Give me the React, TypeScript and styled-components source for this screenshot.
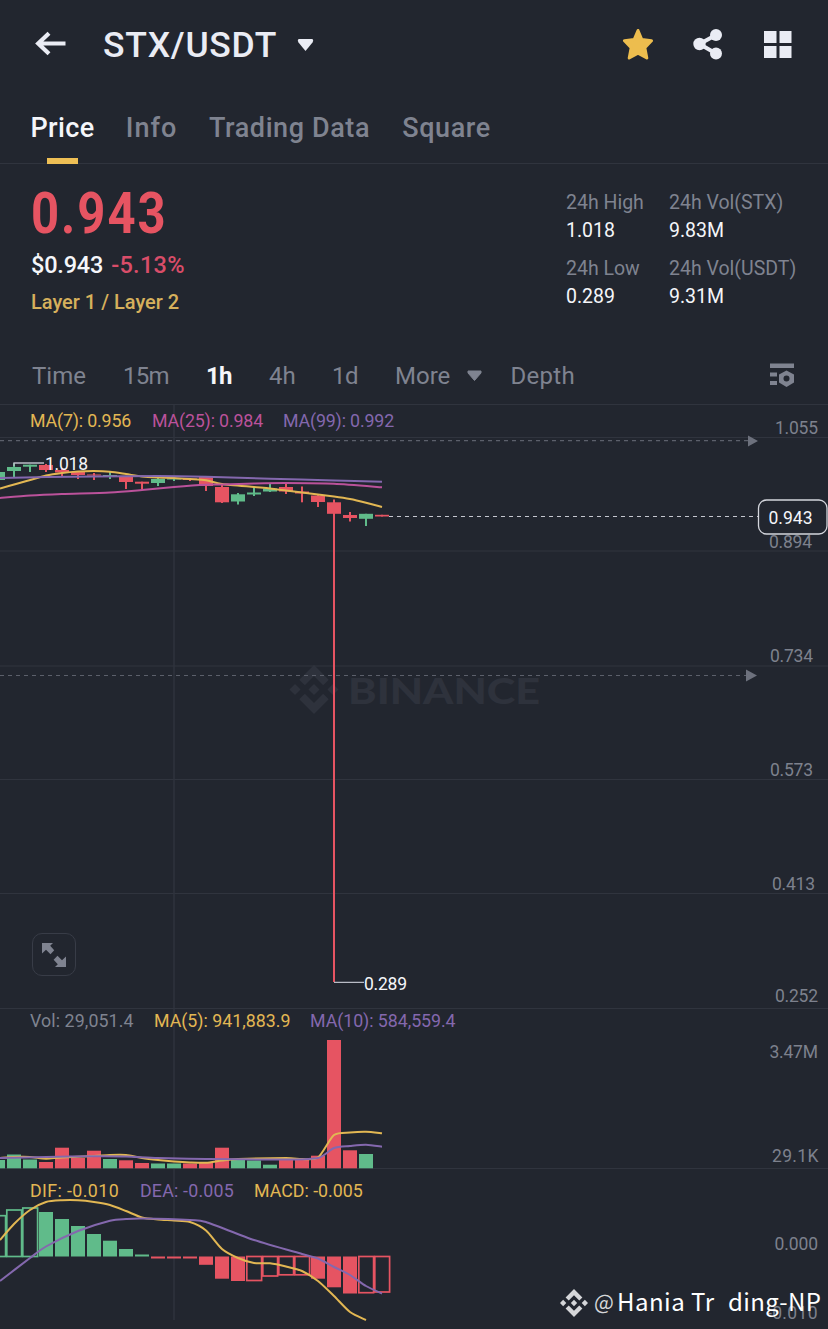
import React from 'react';
import styled, { createGlobalStyle } from 'styled-components';

const color = {
  bg: '#22262f',
  line: '#30343e',
  text: '#eaecf4',
  white: '#f5f6fa',
  muted: '#7f8390',
  axis: '#7d818d',
  red: '#e65462',
  green: '#60bb8a',
  yellow: '#e2b753',
  pink: '#bb529b',
  purple: '#8468ae',
};

const GlobalStyle = createGlobalStyle`
  * { box-sizing: border-box; }
  body {
    margin: 0;
    background: ${color.bg};
    font-family: Roboto, "Liberation Sans", sans-serif;
    -webkit-font-smoothing: antialiased;
  }
`;

const Screen = styled.main`
  position: relative;
  display: flex;
  flex-direction: column;
  width: 828px;
  height: 1329px;
  overflow: hidden;
  background: ${color.bg};
  color: ${color.text};
  white-space: nowrap;
`;

/* Header */

const Header = styled.header`
  display: flex;
  align-items: center;
  height: 91px;
  padding: 0 36px 0 34px;
`;

const BackIcon = styled.svg`
  margin-top: -3px;
`;

const Title = styled.h1`
  flex: 1;
  display: flex;
  align-items: center;
  gap: 20px;
  margin: -1px 0 0 36px;
  font-size: 35.5px;
  font-weight: 500;
  line-height: 44px;
  letter-spacing: 0.75px;
`;

const Actions = styled.div`
  display: flex;
  align-items: center;
  gap: 39px;
  margin-top: -3px;
`;

const Tabs = styled.nav`
  display: flex;
  gap: 31px;
  height: 73px;
  padding: 21px 31px 0 30.500px;
  border-bottom: 1px solid ${color.line};
`;

const Tab = styled.span<{ $width: number; $spacing: number; $active?: boolean }>`
  display: flex;
  flex-direction: column;
  align-items: center;
  justify-content: space-between;
  width: ${p => p.$width}px;
  height: 52px;
  font-size: 27px;
  font-weight: 500;
  line-height: 32px;
  letter-spacing: ${p => p.$spacing}px;
  color: ${p => (p.$active ? color.white : color.muted)};
`;

const TabMark = styled.i`
  width: 31px;
  height: 6px;
  background: #eebf55;
`;

/* Price summary */

const Summary = styled.section`
  display: flex;
  justify-content: space-between;
  height: 182px;
  padding: 22px 30px 0 31px;
`;

const Quote = styled.div`
  display: flex;
  flex-direction: column;
`;

const LastPrice = styled.strong`
  font-size: 57px;
  font-weight: 700;
  line-height: 56px;
  letter-spacing: 2.3px;
  color: ${color.red};
  transform: scaleX(0.86);
  transform-origin: left;
`;

const PriceRow = styled.div`
  display: flex;
  gap: 8px;
  margin-top: 8px;
  font-size: 23.5px;
  font-weight: 500;
  line-height: 30px;
  letter-spacing: -0.2px;
  color: ${color.white};
`;

const Change = styled.span`
  letter-spacing: 0.3px;
  color: #d94d69;
`;

const Tag = styled.span`
  margin-top: 9px;
  font-size: 20px;
  font-weight: 500;
  line-height: 26px;
  color: #d6b05c;
`;

const Stats = styled.dl`
  display: grid;
  grid-template-columns: 103px 129px;
  grid-auto-rows: 66px;
  margin: 3px 0 0;
`;

const Stat = styled.div`
  font-size: 19.5px;
  line-height: 28px;
`;

const StatLabel = styled.dt`
  color: ${color.muted};
`;

const StatValue = styled.dd`
  margin: 0;
  color: ${color.white};
`;

/* Interval bar */

const Intervals = styled.nav`
  display: flex;
  align-items: center;
  height: 59px;
  padding: 1px 33px 0 32px;
  border-bottom: 1px solid ${color.line};
`;

const Interval = styled.span<{ $width: number; $active?: boolean; $spacing?: number; $offset?: number }>`
  display: flex;
  align-items: center;
  justify-content: space-between;
  width: ${p => p.$width}px;
  margin-left: ${p => p.$offset ?? 0}px;
  font-size: 24px;
  font-weight: ${p => (p.$active ? 700 : 400)};
  letter-spacing: ${p => p.$spacing ?? 0}px;
  color: ${p => (p.$active ? color.white : color.muted)};
`;

const Settings = styled.svg`
  margin: 0 0 1px auto;
`;

/* Chart panes */

const Pane = styled.section<{ $height: number }>`
  display: grid;
  height: ${p => p.$height}px;
  & > * { grid-area: 1 / 1; }
`;

const Legend = styled.div<{ $top: number }>`
  z-index: 1;
  display: flex;
  align-items: flex-start;
  height: 34px;
  padding: ${p => p.$top}px 0 0 30px;
  font-size: 17.8px;
  line-height: 22px;
`;

const LegendItem = styled.span<{ $tone: string; $width: number; $spacing?: number }>`
  width: ${p => p.$width}px;
  letter-spacing: ${p => p.$spacing ?? 0}px;
  color: ${p => p.$tone};
`;

const Expand = styled.button`
  z-index: 1;
  align-self: end;
  display: grid;
  place-items: center;
  width: 44px;
  height: 43px;
  margin: 0 0 33px 32px;
  padding: 0;
  border: 1.5px solid #383c47;
  border-radius: 10px;
  background: none;
`;

const Author = styled.div`
  position: absolute;
  left: 560px;
  top: 1285px;
  display: flex;
  align-items: center;
  height: 36px;
  font-family: "Noto Sans CJK SC", "Noto Sans", sans-serif;
  font-size: 24px;
  line-height: 36px;
  color: #fff;
`;

const At = styled.span`
  margin: -4px 0 0 6px;
  width: 23px;
  font-size: 21px;
  color: #d5d6d9;
`;

const AuthorWord = styled.span<{ $width: number; $spacing: number }>`
  width: ${p => p.$width}px;
  margin-top: -4px;
  letter-spacing: ${p => p.$spacing}px;
`;

type Point = [number, number];

function path(points: Point[]) {
  return points.reduce((d, [x, y], i) => {
    if (i === 0) return `M${x} ${y}`;
    const p0 = points[Math.max(i - 2, 0)];
    const p1 = points[i - 1];
    const p3 = points[Math.min(i + 1, points.length - 1)];
    const c1 = [p1[0] + (x - p0[0]) / 8, p1[1] + (y - p0[1]) / 8];
    const c2 = [x - (p3[0] - p1[0]) / 8, y - (p3[1] - p1[1]) / 8];
    return `${d}C${c1[0]} ${c1[1]} ${c2[0]} ${c2[1]} ${x} ${y}`;
  }, '');
}

const Line = ({ points, stroke }: { points: Point[]; stroke: string }) => (
  <path d={path(points)} fill="none" stroke={stroke} strokeWidth={2} strokeLinejoin="round" />
);

const AxisLabel = ({ x, y, w = 43, children, fill = color.axis }: {
  x: number; y: number; w?: number; children: string; fill?: string;
}) => (
  <text x={x} y={y} fontSize={17.5} textLength={w} fill={fill}>{children}</text>
);

const Mark = ({ x, y, size }: { x: number; y: number; size: number }) => (
  <g transform={`translate(${x} ${y}) scale(${size / 24})`}>
    <path d="M0-12 7.2-4.8 4.5-2.1 0-6.6-4.5-2.1-7.2-4.8ZM0 12 7.2 4.8 4.5 2.1 0 6.6-4.5 2.1-7.2 4.8ZM0-2.7 2.7 0 0 2.7-2.7 0ZM-9.3-2.7-6.6 0-9.3 2.7-12 0ZM9.3-2.7 12 0 9.3 2.7 6.6 0Z" />
  </g>
);

// centre x, up?, body top, body bottom, wick top, wick bottom
const candles: [number, boolean, number, number, number, number][] = [
  [-2, true, 472, 480, 472, 480],
  [14, true, 467, 471, 463, 477],
  [30, true, 464.7, 466.7, 464.7, 472],
  [46, false, 465, 470, 464, 472],
  [62, false, 470, 472.5, 469, 476],
  [78, false, 472, 475, 472, 479],
  [94, false, 474.5, 475.5, 473, 480],
  [110, true, 475, 476, 471, 479],
  [126, false, 477, 482, 477, 489],
  [142, false, 481.7, 483.7, 481.7, 489],
  [158, true, 479, 483, 478, 486],
  [174, true, 478.5, 479.5, 477, 481],
  [190, false, 478.5, 480, 478, 481],
  [206, false, 477, 486, 477, 491],
  [222, false, 487, 502.3, 483, 503],
  [238, true, 494.3, 501.5, 493, 504.5],
  [254, true, 492.5, 494.5, 487, 496],
  [270, true, 488.5, 491.5, 484, 492],
  [286, false, 487, 491.5, 483, 494],
  [302, false, 491.5, 493.5, 486.5, 502.3],
  [318, false, 495.5, 502, 495, 507],
  [334, false, 502.3, 513.8, 499.5, 982],
  [350, false, 515, 518, 512, 521.5],
  [366, true, 513.8, 518.8, 513.8, 526],
  [382, false, 514.8, 516.5, 514.8, 516.5],
];

const ma7: Point[] = [[0, 488.5], [16, 484], [32, 479.5], [46, 475.5], [62, 473], [78, 471.5], [94, 471], [110, 471.7], [126, 474], [142, 476.5], [158, 477.5], [174, 478], [190, 479], [206, 480.3], [222, 484], [254, 487], [270, 488.5], [286, 490.5], [302, 492.5], [334, 496.5], [350, 499], [366, 502.7], [382, 507]];
const ma25: Point[] = [[0, 498], [30, 495.5], [62, 494], [110, 492.5], [142, 490], [174, 487], [206, 484.7], [222, 484.5], [254, 483.5], [286, 483], [334, 483.7], [382, 487.3]];
const ma99: Point[] = [[0, 478], [46, 477], [94, 476.5], [158, 476], [206, 476.8], [270, 478.7], [334, 480.5], [382, 481.7]];

// centre x, up?, bar top
const volumes: [number, boolean, number][] = [
  [-2, true, 1160], [14, true, 1154.5], [30, true, 1159.5], [46, false, 1162], [62, false, 1147.7],
  [78, false, 1158], [94, false, 1150.7], [110, true, 1159], [126, false, 1160.3], [142, false, 1163],
  [158, true, 1163.5], [174, true, 1163.5], [190, false, 1163.5], [206, false, 1163], [222, false, 1147.7],
  [238, true, 1160], [254, true, 1160.5], [270, true, 1164.7], [286, false, 1160], [302, false, 1159],
  [318, false, 1155.7], [334, false, 1040], [350, false, 1150.3], [366, true, 1154],
];
const vol5: Point[] = [[0, 1158], [14, 1157], [30, 1157], [46, 1158.7], [62, 1157.5], [94, 1156], [110, 1155], [126, 1155], [142, 1158], [158, 1160], [174, 1161.5], [190, 1162.5], [206, 1162.8], [222, 1160.5], [238, 1159], [286, 1158], [302, 1159], [318, 1157.5], [334, 1135], [350, 1132.5], [366, 1131.7], [382, 1133.3]];
const vol10: Point[] = [[0, 1158], [46, 1157], [94, 1156.3], [126, 1156.5], [158, 1158], [206, 1159], [286, 1159.5], [318, 1158], [334, 1148], [350, 1146], [366, 1144.7], [382, 1146.7]];

// centre x, bar end, hollow?
const macd: [number, number, boolean][] = [
  [-2, 1215.7, true], [14, 1210, true], [30, 1208, true], [46, 1212, false], [62, 1219, false],
  [78, 1226, false], [94, 1234, false], [110, 1240.7, false], [126, 1249, false], [142, 1254.5, false],
  [158, 1258.5, false], [174, 1258.5, false], [190, 1258.5, false], [206, 1264.8, false], [222, 1278.7, false],
  [238, 1281, false], [254, 1280.5, true], [270, 1276, true], [286, 1274.8, true], [302, 1274.8, true],
  [318, 1278.7, false], [334, 1287.3, false], [350, 1293.5, false], [366, 1292.7, true], [382, 1292, true],
];
const dif: Point[] = [[0, 1240], [14, 1224], [30, 1210], [46, 1202], [62, 1200.3], [78, 1200.3], [94, 1202], [110, 1205], [126, 1211], [142, 1217.5], [158, 1219.5], [174, 1220.5], [190, 1222], [206, 1230.5], [222, 1249], [238, 1258], [254, 1263], [270, 1263.3], [286, 1266.5], [302, 1271], [318, 1281], [334, 1296], [350, 1312], [366, 1320]];
const dea: Point[] = [[0, 1281], [30, 1258], [46, 1246.5], [78, 1231], [110, 1220.7], [126, 1219], [142, 1218.5], [190, 1220], [206, 1222], [254, 1240], [302, 1254], [318, 1258.5], [334, 1267], [350, 1275], [366, 1286], [382, 1293.5]];

const zero = 1256.5;
const gridRows = [437.5, 551, 666, 779.5, 893.5];

const PriceChart = () => (
  <svg width="828" height="604" viewBox="0 405 828 604">
    <g fill="#2e323c">
      <Mark x={314} y={689.5} size={49} />
      <text x="348" y="703.5" fontFamily="Lato" fontWeight="900" fontSize="36" textLength="192" lengthAdjust="spacingAndGlyphs">BINANCE</text>
    </g>
    <g stroke={color.line}>
      {gridRows.map(y => <path key={y} d={`M0 ${y}H828`} />)}
      <path d="M174 405V1009" strokeWidth="1.4" />
      <path d="M0 1008.5H828" />
    </g>
    <path d="M0 440.7H748M0 675.5H746" stroke="#5c606b" strokeWidth="1.2" strokeDasharray="4 4" />
    <path d="M748 435.5 758 441 748 446.5ZM746 669.5 757 675.5 746 681.5Z" fill="#6d717d" />
    {candles.map(([x, up, top, bottom, high, low]) => (
      <g key={x} fill={up ? color.green : color.red}>
        <rect x={x - 1} y={high} width={2} height={low - high} />
        <rect x={x - 7} y={top} width={14} height={bottom - top} />
      </g>
    ))}
    <Line points={ma7} stroke={color.yellow} />
    <Line points={ma25} stroke={color.pink} />
    <Line points={ma99} stroke={color.purple} />
    <path d="M14 466V463H44M334 982.3H364" fill="none" stroke="#b9bcc6" strokeWidth="1.3" />
    <AxisLabel x={45} y={470} fill={color.white}>1.018</AxisLabel>
    <AxisLabel x={364} y={989.5} fill={color.white}>0.289</AxisLabel>
    <path d="M389 516.5H758" stroke="#c5c7d0" strokeWidth="1.2" strokeDasharray="4 4" />
    <AxisLabel x={775} y={433.5}>1.055</AxisLabel>
    <AxisLabel x={769} y={547.5}>0.894</AxisLabel>
    <AxisLabel x={770} y={661.5}>0.734</AxisLabel>
    <AxisLabel x={770} y={775.5}>0.573</AxisLabel>
    <AxisLabel x={772} y={890}>0.413</AxisLabel>
    <AxisLabel x={775} y={1002}>0.252</AxisLabel>
    <rect x="758.5" y="500" width="68.5" height="34" rx="8" fill={color.bg} stroke="#d4d6dd" strokeWidth="1.3" />
    <AxisLabel x={768.5} y={523.5} w={44} fill={color.white}>0.943</AxisLabel>
  </svg>
);

const VolumeChart = () => (
  <svg width="828" height="160" viewBox="0 1009 828 160">
    <path d="M0 1168.5H828" stroke={color.line} />
    <path d="M174 1009V1169" stroke={color.line} strokeWidth="1.4" />
    {volumes.map(([x, up, top]) => (
      <rect key={x} x={x - 7} y={top} width={14} height={1168.3 - top} fill={up ? color.green : color.red} />
    ))}
    <Line points={vol5} stroke={color.yellow} />
    <Line points={vol10} stroke={color.purple} />
    <AxisLabel x={769.5} y={1058} w={48.5}>3.47M</AxisLabel>
    <AxisLabel x={772} y={1162} w={46.5}>29.1K</AxisLabel>
  </svg>
);

const MacdChart = () => (
  <svg width="828" height="160" viewBox="0 1169 828 160">
    <path d="M174 1169V1320" stroke={color.line} strokeWidth="1.4" />
    {macd.map(([x, end, hollow]) => {
      const tone = end < zero ? color.green : color.red;
      const top = Math.min(end, zero);
      const h = Math.abs(end - zero);
      return hollow
        ? <rect key={x} x={x - 7.2} y={top} width={14.8} height={h} fill="none" stroke={tone} strokeWidth={1.7} />
        : <rect key={x} x={x - 7} y={top} width={14} height={h} fill={tone} />;
    })}
    <Line points={dif} stroke={color.yellow} />
    <Line points={dea} stroke={color.purple} />
    <AxisLabel x={774.5} y={1250} w={43.5}>0.000</AxisLabel>
    <AxisLabel x={767} y={1319} w={50.5}>-0.010</AxisLabel>
  </svg>
);

export default function App() {
  return (
    <Screen>
      <GlobalStyle />
      <Header>
        <BackIcon width="33" height="26" viewBox="34 31 33 26" fill="none" stroke={color.text} strokeWidth="4.2">
          <path d="M49 33.300 38.200 43.500 49 53.700M38 43.500H65.500" />
        </BackIcon>
        <Title>
          STX/USDT
          <svg width="17" height="14" viewBox="0 0 17 14"><path d="M1.500 1H15.500Q17 2.500 15.500 4.500L8.500 13 1.500 4.500Q0 2.500 1.500 1Z" fill={color.text} /></svg>
        </Title>
        <Actions>
          <svg width="32" height="32" viewBox="0 0 32 32"><path d="M16 2.500 19.800 11.500 29.500 12.700 22.800 19.600 24.800 30 16 25.200 7.200 30 9.200 19.600 2.500 12.700 12.200 11.500Z" fill="#edbd4e" stroke="#edbd4e" strokeWidth="3" strokeLinejoin="round" /></svg>
          <svg width="30" height="32" viewBox="0 0 30 32" fill={color.text} stroke={color.text}>
            <path d="M6.500 16 23 7M6.500 16 23 25.500" strokeWidth="4" />
            <circle cx="6.500" cy="16" r="6.200" stroke="none" /><circle cx="23" cy="7" r="6" stroke="none" /><circle cx="23" cy="25.500" r="6" stroke="none" />
          </svg>
          <svg width="30" height="30" viewBox="0 0 30 30" fill={color.text}>
            <path d="M2 2H14.500V14H2ZM17.500 2H29.500V14H17.500ZM2 17H14.500V29H2ZM17.500 17H29.500V29H17.500Z" />
          </svg>
        </Actions>
      </Header>
      <Tabs>
        <Tab $width={64} $spacing={0.4} $active>Price<TabMark /></Tab>
        <Tab $width={52} $spacing={1}>Info</Tab>
        <Tab $width={162} $spacing={0.6}>Trading Data</Tab>
        <Tab $width={90} $spacing={0.6}>Square</Tab>
      </Tabs>
      <Summary>
        <Quote>
          <LastPrice>0.943</LastPrice>
          <PriceRow>$0.943<Change>-5.13%</Change></PriceRow>
          <Tag>Layer 1 / Layer 2</Tag>
        </Quote>
        <Stats>
          <Stat><StatLabel>24h High</StatLabel><StatValue>1.018</StatValue></Stat>
          <Stat><StatLabel>24h Vol(STX)</StatLabel><StatValue>9.83M</StatValue></Stat>
          <Stat><StatLabel>24h Low</StatLabel><StatValue>0.289</StatValue></Stat>
          <Stat><StatLabel>24h Vol(USDT)</StatLabel><StatValue>9.31M</StatValue></Stat>
        </Stats>
      </Summary>
      <Intervals>
        <Interval $width={91}>Time</Interval>
        <Interval $width={83} $spacing={-0.8}>15m</Interval>
        <Interval $width={63} $spacing={-0.8} $active>1h</Interval>
        <Interval $width={63}>4h</Interval>
        <Interval $width={63} $spacing={-0.5}>1d</Interval>
        <Interval $width={87}>
          More
          <svg width="15" height="12" viewBox="0 0 15 12"><path d="M1 1H14V3L7.500 10.500 1 3Z" fill={color.muted} stroke={color.muted} strokeLinejoin="round" /></svg>
        </Interval>
        <Interval $width={90} $offset={28.5} $spacing={0.3}>Depth</Interval>
        <Settings width="26" height="26" viewBox="0 0 26 26" fill={color.muted}>
          <path d="M1 1.500H25V6H1ZM1 10.500H8V14.500H1ZM1 19H8V23H1Z" />
          <path fillRule="evenodd" d="M17.500 8.500 25 12.500V20.500L17.500 25 10 20.500V12.500ZM17.500 13.500A3 3 0 1 0 17.500 19.500A3 3 0 1 0 17.500 13.500Z" />
        </Settings>
      </Intervals>
      <Pane $height={604}>
        <PriceChart />
        <Legend $top={5}>
          <LegendItem $tone={color.yellow} $width={122} $spacing={-0.15}>MA(7): 0.956</LegendItem>
          <LegendItem $tone={color.pink} $width={131} $spacing={-0.15}>MA(25): 0.984</LegendItem>
          <LegendItem $tone={color.purple} $width={120} $spacing={-0.15}>MA(99): 0.992</LegendItem>
        </Legend>
        <Expand aria-label="Full screen">
          <svg width="28" height="28" viewBox="0 0 28 28" fill={color.muted}>
            <path d="M2 2H13L10.200 4.800 14.200 9.200 10.500 13.200 6 8.800 2 12.500ZM26 26H15L17.800 23.200 13.600 18.800 17.500 14.800 22 19.200 26 15.500Z" />
          </svg>
        </Expand>
      </Pane>
      <Pane $height={160}>
        <VolumeChart />
        <Legend $top={1}>
          <LegendItem $tone={color.muted} $width={124} $spacing={0.1}>Vol: 29,051.4</LegendItem>
          <LegendItem $tone={color.yellow} $width={156}>MA(5): 941,883.9</LegendItem>
          <LegendItem $tone={color.purple} $width={150} $spacing={-0.05}>MA(10): 584,559.4</LegendItem>
        </Legend>
      </Pane>
      <Pane $height={160}>
        <MacdChart />
        <Legend $top={11}>
          <LegendItem $tone={color.yellow} $width={110} $spacing={0.4}>DIF: -0.010</LegendItem>
          <LegendItem $tone={color.purple} $width={114} $spacing={0.2}>DEA: -0.005</LegendItem>
          <LegendItem $tone={color.yellow} $width={114}>MACD: -0.005</LegendItem>
        </Legend>
      </Pane>
      <Author>
        <svg width="28" height="28" viewBox="0 0 28 28" fill="#d5d6d9"><Mark x={14} y={14} size={28} /></svg>
        <At>@</At>
        <AuthorWord $width={111} $spacing={0.5}>Hania Tr</AuthorWord>
        <AuthorWord $width={94} $spacing={0.4}>ding-NP</AuthorWord>
      </Author>
    </Screen>
  );
}
